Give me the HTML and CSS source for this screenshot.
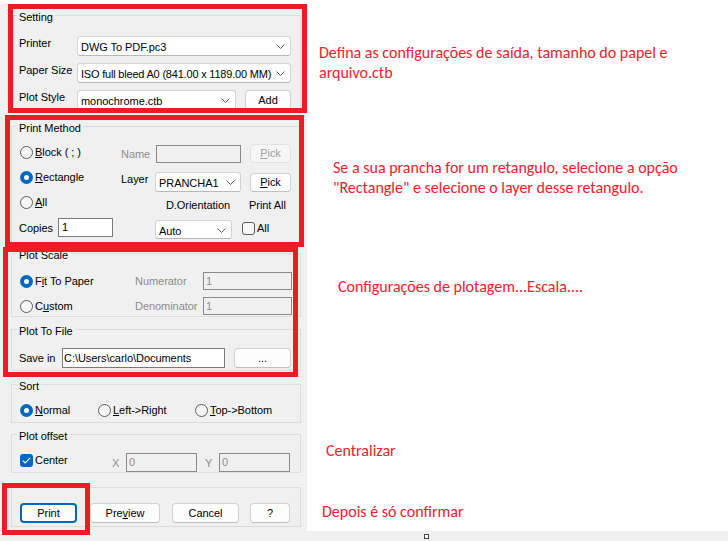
FILE: index.html
```html
<!DOCTYPE html>
<html lang="pt">
<head>
<meta charset="utf-8">
<title>Plot</title>
<link rel="stylesheet" href="styles.css">
</head>
<body>
<div class="topstrip"></div>
<div class="main">
  <div class="dialog">
    <section class="group g-setting">
      <div class="legend">Setting</div>
      <div class="row set-row first">
        <span class="lbl set-lbl">Printer</span>
        <div class="combo set-combo"><span>DWG To PDF.pc3</span><svg class="chev" width="9" height="5" viewBox="0 0 9 5"><path d="M0.5 0.5L4.5 4.5L8.5 0.5" fill="none" stroke="#5d5d5d"/></svg></div>
      </div>
      <div class="row set-row">
        <span class="lbl set-lbl">Paper Size</span>
        <div class="combo set-combo"><span class="tight">ISO full bleed A0 (841.00 x 1189.00 MM)</span><svg class="chev" width="9" height="5" viewBox="0 0 9 5"><path d="M0.5 0.5L4.5 4.5L8.5 0.5" fill="none" stroke="#5d5d5d"/></svg></div>
      </div>
      <div class="row set-row">
        <span class="lbl set-lbl">Plot Style</span>
        <div class="combo style-combo"><span>monochrome.ctb</span><svg class="chev" width="9" height="5" viewBox="0 0 9 5"><path d="M0.5 0.5L4.5 4.5L8.5 0.5" fill="none" stroke="#5d5d5d"/></svg></div>
        <button class="btn add-btn">Add</button>
      </div>
    </section>

    <section class="group g-method">
      <div class="legend">Print Method</div>
      <div class="row pm-row1">
        <label class="opt pm-opt"><span class="radio"></span><span><u>B</u>lock ( ; )</span></label>
        <span class="lbl dis-text name-lbl">Name</span>
        <div class="inp dis name-inp"></div>
        <button class="btn dis-btn pick-btn"><u>P</u>ick</button>
      </div>
      <div class="row pm-row2">
        <label class="opt pm-opt"><span class="radio on"></span><span><u>R</u>ectangle</span></label>
        <span class="lbl layer-lbl">Layer</span>
        <div class="combo layer-combo"><span>PRANCHA1</span><svg class="chev" width="9" height="5" viewBox="0 0 9 5"><path d="M0.5 0.5L4.5 4.5L8.5 0.5" fill="none" stroke="#5d5d5d"/></svg></div>
        <button class="btn pick-btn"><u>P</u>ick</button>
      </div>
      <div class="row pm-row3">
        <label class="opt pm-opt pm-opt-all"><span class="radio"></span><span><u>A</u>ll</span></label>
        <span class="orient">D.Orientation</span>
        <span class="printall">Print All</span>
      </div>
      <div class="row pm-row4">
        <span class="lbl copies-lbl">Copies</span>
        <div class="inp copies-inp">1</div>
        <div class="combo auto-combo"><span>Auto</span><svg class="chev" width="9" height="5" viewBox="0 0 9 5"><path d="M0.5 0.5L4.5 4.5L8.5 0.5" fill="none" stroke="#5d5d5d"/></svg></div>
        <label class="opt all-chk"><span class="check"></span><span>All</span></label>
      </div>
    </section>

    <section class="group g-scale">
      <div class="legend">Plot Scale</div>
      <div class="row sc-row first">
        <label class="opt sc-opt"><span class="radio on"></span><span>F<u>i</u>t To Paper</span></label>
        <span class="lbl dis-text sc-lbl">Numerator</span>
        <div class="inp dis sc-inp">1</div>
      </div>
      <div class="row sc-row">
        <label class="opt sc-opt"><span class="radio"></span><span>C<u>u</u>stom</span></label>
        <span class="lbl dis-text sc-lbl">Denominator</span>
        <div class="inp dis sc-inp">1</div>
      </div>
    </section>

    <section class="group g-file">
      <div class="legend">Plot To File</div>
      <div class="row file-row">
        <span class="lbl save-lbl">Save in</span>
        <div class="inp save-inp">C:\Users\carlo\Documents</div>
        <button class="btn dots-btn">...</button>
      </div>
    </section>

    <section class="group g-sort">
      <div class="legend">Sort</div>
      <div class="row sort-row">
        <label class="opt sort-a"><span class="radio on"></span><span><u>N</u>ormal</span></label>
        <label class="opt sort-b"><span class="radio"></span><span><u>L</u>eft-&gt;Right</span></label>
        <label class="opt"><span class="radio"></span><span><u>T</u>op-&gt;Bottom</span></label>
      </div>
    </section>

    <section class="group g-offset">
      <div class="legend">Plot offset</div>
      <div class="row off-row">
        <label class="opt center-chk"><span class="check on"><svg width="9" height="7" viewBox="0 0 9 7"><path d="M0.8 3.6L3.2 6L8.2 0.8" fill="none" stroke="#fff" stroke-width="1.2"/></svg></span><span>Center</span></label>
        <span class="lbl dis-text xy-lbl">X</span>
        <div class="inp dis xy-inp">0</div>
        <span class="lbl dis-text xy-lbl y-lbl">Y</span>
        <div class="inp dis xy-inp">0</div>
      </div>
    </section>

    <section class="group g-buttons">
      <div class="row btn-row">
        <button class="btn default print-btn">Print</button>
        <button class="btn preview-btn">Pre<u>v</u>iew</button>
        <button class="btn cancel-btn">Cancel</button>
        <button class="btn help-btn">?</button>
      </div>
    </section>
  </div>

  <div class="notes">
    <p class="note n1">Defina as configurações de saída, tamanho do papel e<br>arquivo.ctb</p>
    <p class="note n2">Se a sua prancha for um retangulo, selecione a opção<br>"Rectangle" e selecione o layer desse retangulo.</p>
    <p class="note n3">Configurações de plotagem...Escala....</p>
    <p class="note n4">Centralizar</p>
    <p class="note n5">Depois é só confirmar</p>
  </div>
</div>
<div class="bottomstrip"><span class="grip"></span></div>

<div class="mark m1"></div>
<div class="mark m2"></div>
<div class="mark m3"></div>
<div class="mark m4"></div>
</body>
</html>
```

FILE: styles.css
```css
* { box-sizing: border-box; }
html, body { margin: 0; padding: 0; }
body {
  width: 728px;
  height: 541px;
  overflow: hidden;
  background: #ffffff;
  font-family: "Liberation Sans", Arial, sans-serif;
  font-size: 11px;
  color: #000;
  position: relative;
}
u { text-decoration: underline; text-underline-offset: 1px; }

.topstrip { height: 4px; }
.main { display: flex; height: 527px; }

.dialog {
  width: 307px;
  background: #f0f0f0;
  display: flex;
  flex-direction: column;
  padding-left: 11px;
  letter-spacing: -0.05px;
}

.group {
  border: 1px solid #dcdcdc;
  width: 290px;
  display: flex;
  flex-direction: column;
  padding-left: 7px;
  flex: none;
}
.legend {
  align-self: flex-start;
  margin: -6px 0 0 -2px;
  padding: 0 2px;
  background: #f0f0f0;
  line-height: 14px;
  height: 14px;
  white-space: nowrap;
}
.row { display: flex; align-items: center; white-space: nowrap; }
.lbl { line-height: 14px; }
.dis-text { color: #8d8d8d; }
.tight { letter-spacing: -0.2px; }

/* controls */
.combo {
  display: flex;
  align-items: center;
  justify-content: space-between;
  background: #fff;
  border: 1px solid #d3d3d3;
  border-bottom-color: #b8b8b8;
  border-radius: 3px;
  padding: 2px 5px 0 3px;
  height: 20px;
  line-height: 14px;
  overflow: hidden;
  flex: none;
}
.chev { flex: none; margin-top: -1px; }
.inp {
  background: #fff;
  border: 1px solid #7a7a7a;
  height: 19px;
  line-height: 17px;
  padding-left: 2px;
  flex: none;
}
.inp.dis { background: #f0f0f0; border-color: #8a8a8a; color: #8d8d8d; }
.btn {
  font-family: inherit;
  font-size: 11px;
  letter-spacing: inherit;
  color: #000;
  background: #fdfdfd;
  border: 1px solid #d0d0d0;
  border-bottom-color: #c0c0c0;
  border-radius: 4px;
  padding: 0;
  height: 20px;
  line-height: 16px;
  text-align: center;
  flex: none;
}
.btn.dis-btn { background: #f6f6f6; border-color: #e2e2e2; color: #a0a0a0; }
.btn.default { border: 2px solid #0067c0; line-height: 14px; }

.opt { display: flex; align-items: center; line-height: 14px; flex: none; }
.radio {
  width: 13px;
  height: 13px;
  border-radius: 50%;
  border: 1px solid #5c5c5c;
  background: #f6f6f6;
  margin: 0 2px 0 1px;
  flex: none;
}
.radio.on { border: none; background: #fff; box-shadow: inset 0 0 0 4px #0067c0; }
.check {
  width: 13px;
  height: 13px;
  border-radius: 3px;
  border: 1px solid #5c5c5c;
  background: #f6f6f6;
  margin-right: 2px;
  flex: none;
  display: flex;
  align-items: center;
  justify-content: center;
}
.check.on { border: none; background: #0067c0; }

/* Setting */
.g-setting { margin: 11px 0 0 2px; width: 288px; height: 102px; padding-left: 5px; }
.set-row { height: 20px; margin-top: 7px; align-items: flex-start; }
.set-row.first { margin-top: 12px; }
.set-lbl { width: 58px; margin-top: 0; flex: none; }
.set-combo { width: 214px; }
.style-combo { width: 159px; }
.add-btn { margin-left: 9px; width: 46px; }

/* Print method */
.g-method { margin-top: 9px; height: 118px; }
.pm-opt { width: 102px; }
.pm-row1 { height: 19px; margin-top: 9px; }
.pm-row1 .pm-opt { margin-bottom: 3px; }
.name-lbl { width: 35px; }
.name-inp { width: 85px; height: 18px; }
.pick-btn { margin-left: 9px; width: 41px; height: 19px; line-height: 15px; }
.pm-row2 { height: 20px; margin-top: 9px; }
.pm-row2 .pm-opt { margin-bottom: 10px; }
.layer-lbl { width: 34px; align-self: flex-start; margin-top: 0; }
.layer-combo { width: 86px; }
.pm-row3 { height: 20px; margin-top: 3px; }
.pm-opt-all { margin-bottom: 6px; }
.orient { width: 86px; margin-left: 34px; text-align: center; }
.printall { margin-left: 8px; }
.pm-row4 { height: 21px; margin-top: 3px; align-items: flex-start; }
.copies-lbl { width: 39px; margin-top: 3px; }
.copies-inp { width: 55px; padding-left: 3px; }
.auto-combo { width: 77px; height: 19px; margin: 2px 0 0 42px; }
.all-chk { margin: 3px 0 0 10px; }

/* Scale */
.g-scale { margin-top: 9px; height: 64px; }
.sc-row { height: 18px; margin-top: 7px; }
.sc-row.first { margin-top: 10px; }
.sc-opt { width: 116px; }
.sc-lbl { width: 68px; }
.sc-inp { width: 89px; height: 18px; line-height: 16px; }

/* File */
.g-file { margin-top: 12px; height: 42px; }
.file-row { height: 21px; margin-top: 9px; }
.save-lbl { width: 43px; }
.save-inp { width: 163px; height: 20px; line-height: 18px; padding-left: 1px; }
.dots-btn { margin-left: 9px; width: 57px; }

/* Sort */
.g-sort { margin-top: 13px; height: 39px; }
.sort-row { height: 18px; margin-top: 8px; }
.sort-a { width: 78px; }
.sort-b { width: 97px; }

/* Offset */
.g-offset { margin-top: 11px; height: 39px; }
.off-row { height: 19px; margin-top: 10px; }
.center-chk { width: 93px; padding-left: 1px; margin-bottom: 5px; }
.xy-lbl { width: 14px; }
.y-lbl { margin-left: 8px; }
.xy-inp { width: 71px; }

/* Buttons */
.g-buttons { margin-top: 14px; height: 40px; padding-left: 8px; }
.btn-row { margin-top: 15px; height: 20px; }
.print-btn { width: 57px; }
.preview-btn { width: 70px; margin-left: 13px; }
.cancel-btn { width: 67px; margin-left: 12px; }
.help-btn { width: 40px; margin-left: 11px; }

/* Notes */
.notes {
  display: flex;
  flex-direction: column;
  font-family: "Carlito", "Lato", "Liberation Sans", sans-serif;
  font-size: 16px;
  line-height: 20px;
  color: #f0202a;
}
.note { margin: 0; white-space: nowrap; }
.n1 { margin: 39px 0 0 12px; }
.n2 { margin: 75px 0 0 26px; }
.n3 { margin: 79px 0 0 31px; }
.n4 { margin: 144px 0 0 19px; }
.n5 { margin: 41px 0 0 15px; }

.bottomstrip { height: 10px; background: #f0f0f0; display: flex; align-items: flex-start; }
.grip { width: 5px; height: 5px; border: 1px solid #444; margin: 3px 0 0 424px; background: #fff; }

/* annotation frames */
.mark { position: absolute; border: 5px solid #ed1c24; }
.m1 { left: 8px; top: 4px; width: 299px; height: 109px; }
.m2 { left: 5px; top: 115px; width: 299px; height: 132px; }
.m3 { left: 3px; top: 247px; width: 295px; height: 130px; }
.m4 { left: 2px; top: 483px; width: 88px; height: 52px; }
```
